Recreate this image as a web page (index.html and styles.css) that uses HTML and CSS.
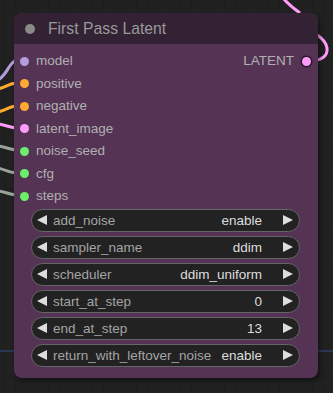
FILE: index.html
```html
<!DOCTYPE html>
<html>
<head>
<meta charset="utf-8">
<link rel="stylesheet" href="styles.css">
</head>
<body>
<div class="canvas">
  <svg class="links" width="333" height="393" viewBox="0 0 333 393">
    <path d="M0,351 L333,351" stroke="#2d3f66" stroke-width="1.5" fill="none"/>
    <path d="M-2,80 C8,74 8,64 16,60" stroke="#b39ddb" stroke-width="3" fill="none"/>
    <path d="M-2,89 C6,87 8,84 16,83" stroke="#ffa931" stroke-width="3" fill="none"/>
    <path d="M-2,112 C6,110 8,107 16,106" stroke="#ffa931" stroke-width="3" fill="none"/>
    <path d="M-2,124 C6,125 8,127 16,128" stroke="#ff9cf9" stroke-width="3" fill="none"/>
    <path d="M-2,146 C6,147 8,149 16,150" stroke="#9aa39a" stroke-width="3" fill="none"/>
    <path d="M-2,168 C6,170 8,172 16,173" stroke="#9aa39a" stroke-width="3" fill="none"/>
    <path d="M-2,191 C6,192 8,194 16,195" stroke="#9aa39a" stroke-width="3" fill="none"/>
    <path d="M283,-2 C288,4 293,8 300,13" stroke="#ff9cf9" stroke-width="3" fill="none"/>
    <path d="M307,61 C322,61 328,56 327,48 C326,42 322,38 316,34" stroke="#ff9cf9" stroke-width="3" fill="none"/>
  </svg>

  <div class="node">
    <div class="title">
      <span class="title-dot"></span>
      <span class="title-text">First Pass Latent</span>
    </div>
    <div class="body">
      <div class="slots">
        <div class="slot">
          <span class="dot dot-model"></span><span class="label">model</span>
          <span class="out-label">LATENT</span><span class="dot out-dot dot-latent"></span>
        </div>
        <div class="slot"><span class="dot dot-cond"></span><span class="label">positive</span></div>
        <div class="slot"><span class="dot dot-cond"></span><span class="label">negative</span></div>
        <div class="slot"><span class="dot dot-latent"></span><span class="label">latent_image</span></div>
        <div class="slot"><span class="dot dot-int"></span><span class="label">noise_seed</span></div>
        <div class="slot"><span class="dot dot-int"></span><span class="label">cfg</span></div>
        <div class="slot"><span class="dot dot-int"></span><span class="label">steps</span></div>
      </div>
      <div class="widgets">
        <div class="widget"><span class="arrow-l"></span><span class="w-label">add_noise</span><span class="w-value">enable</span><span class="arrow-r"></span></div>
        <div class="widget"><span class="arrow-l"></span><span class="w-label">sampler_name</span><span class="w-value">ddim</span><span class="arrow-r"></span></div>
        <div class="widget"><span class="arrow-l"></span><span class="w-label">scheduler</span><span class="w-value">ddim_uniform</span><span class="arrow-r"></span></div>
        <div class="widget"><span class="arrow-l"></span><span class="w-label">start_at_step</span><span class="w-value">0</span><span class="arrow-r"></span></div>
        <div class="widget"><span class="arrow-l"></span><span class="w-label">end_at_step</span><span class="w-value">13</span><span class="arrow-r"></span></div>
        <div class="widget"><span class="arrow-l"></span><span class="w-label">return_with_leftover_noise</span><span class="w-value">enable</span><span class="arrow-r"></span></div>
      </div>
    </div>
  </div>
</div>
</body>
</html>
```

FILE: styles.css
```css
html, body {
  margin: 0;
  padding: 0;
}
body {
  width: 333px;
  height: 393px;
  overflow: hidden;
  background-color: #202020;
  font-family: "Liberation Sans", Arial, sans-serif;
}
.canvas {
  position: relative;
  width: 333px;
  height: 393px;
  background-color: #212121;
  background-image:
    linear-gradient(to right, rgba(0,0,0,0.1) 1px, transparent 1px),
    linear-gradient(to bottom, rgba(0,0,0,0.1) 1px, transparent 1px);
  background-size: 11px 11px;
  background-position: 4px 2px;
}
.links {
  position: absolute;
  left: 0;
  top: 0;
}
.node {
  position: absolute;
  left: 14px;
  top: 13px;
  width: 304px;
  height: 365px;
  border-radius: 8px;
  background: #553355;
  box-shadow: 2px 3px 4px rgba(0,0,0,0.45);
  display: flex;
  flex-direction: column;
}
.title {
  height: 31px;
  background: #332233;
  border-radius: 8px 8px 0 0;
  display: flex;
  align-items: center;
  padding-left: 11px;
  box-sizing: border-box;
}
.title-dot {
  width: 10px;
  height: 10px;
  border-radius: 50%;
  background: #8a8a8a;
  margin-right: 13px;
}
.title-text {
  color: #999;
  font-size: 15.75px;
  line-height: 31px;
}
.body {
  flex: 1;
  display: flex;
  flex-direction: column;
  padding-top: 6px;
}
.slots {
  display: flex;
  flex-direction: column;
}
.slot {
  position: relative;
  height: 22.5px;
  display: flex;
  align-items: center;
  font-size: 13.5px;
  color: #b0b0b0;
}
.dot {
  width: 9px;
  height: 9px;
  border-radius: 50%;
  margin-left: 5.5px;
  margin-right: 7.5px;
  flex: none;
}
.dot-model { background: #b39ddb; }
.dot-cond { background: #ffa931; }
.dot-latent { background: #ff9cf9; }
.dot-int { background: #6bef6b; }
.label {
  line-height: 22.5px;
}
.out-label {
  margin-left: auto;
  line-height: 22.5px;
}
.out-dot {
  margin-left: 8px;
  margin-right: 7px;
  box-shadow: 0 0 0 1.5px #2a1a2a;
}
.widgets {
  display: flex;
  flex-direction: column;
  gap: 4px;
  padding: 1px 18px 0 17px;
}
.widget {
  height: 23px;
  box-sizing: border-box;
  border: 1px solid #666;
  border-radius: 12px;
  background: #222;
  display: flex;
  align-items: center;
  font-size: 13.5px;
}
.arrow-l {
  width: 0;
  height: 0;
  border-top: 5.5px solid transparent;
  border-bottom: 5.5px solid transparent;
  border-right: 10px solid #ddd;
  margin-left: 5px;
  margin-right: 6px;
  flex: none;
}
.arrow-r {
  width: 0;
  height: 0;
  border-top: 5.5px solid transparent;
  border-bottom: 5.5px solid transparent;
  border-left: 10px solid #ddd;
  margin-left: 21px;
  margin-right: 6px;
  flex: none;
}
.w-label {
  color: #a4a4a4;
  white-space: nowrap;
}
.w-value {
  margin-left: auto;
  color: #ddd;
  white-space: nowrap;
  padding-left: 8px;
}
```
